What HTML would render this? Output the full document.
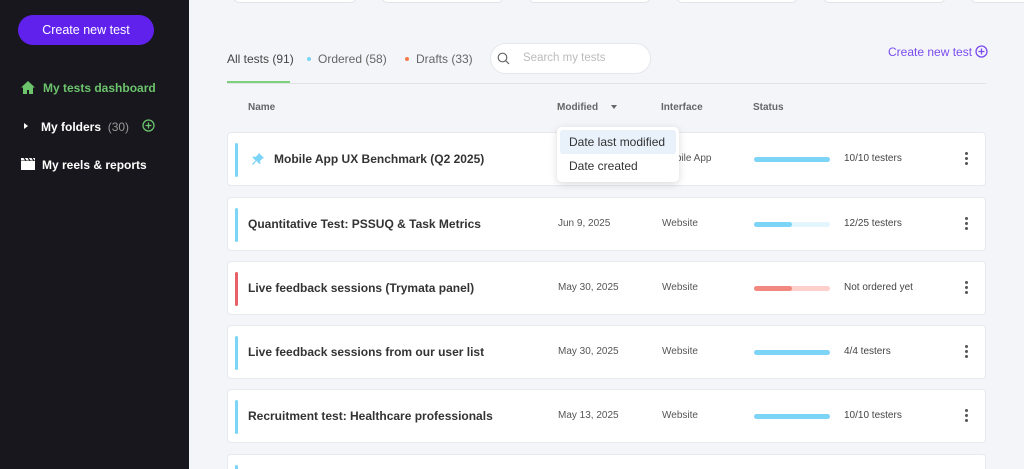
<!DOCTYPE html>
<html><head><meta charset="utf-8"><style>
*{box-sizing:border-box;margin:0;padding:0}
html,body{width:1024px;height:469px;overflow:hidden}
body{background:#f4f5f9;font-family:"Liberation Sans",sans-serif;position:relative}
.side{position:absolute;left:0;top:0;width:189px;height:469px;background:#17171d}
.btn{position:absolute;left:18px;top:15px;width:136px;height:30px;border-radius:15px;background:#5f21eb;color:#fff;font-size:12.5px;text-align:center;line-height:30px}
.nav{position:absolute;font-size:12px;font-weight:bold;color:#fff;white-space:nowrap}
.a{position:absolute;font-size:12px;white-space:nowrap}
.topc{position:absolute;top:-10px;height:13px;background:#fff;border:1px solid #e3e4ea;border-radius:8px}
.card{position:absolute;left:227px;width:759px;height:54px;background:#fff;border:1px solid #e8e9ee;border-radius:4px}
.bar{position:absolute;left:7px;top:10px;width:3px;height:34px;border-radius:2px}
.t{position:absolute;left:20px;top:19px;font-size:12px;font-weight:bold;color:#333}
.d{position:absolute;left:330px;top:20px;font-size:10px;color:#555}
.i{position:absolute;left:434px;top:20px;font-size:10px;color:#555}
.pb{position:absolute;left:526px;top:24px;width:76px;height:5px;border-radius:3px}
.pf{position:absolute;left:0;top:0;height:5px;border-radius:3px}
.s{position:absolute;left:616px;top:20px;font-size:10px;color:#444}
.k{position:absolute;left:737px;top:19px;width:3px}
.k i{display:block;width:3px;height:3px;border-radius:2px;background:#555;margin-bottom:2px}
</style></head><body>
<div class="side">
<div class="btn">Create new test</div>
<svg style="position:absolute;left:21px;top:81px" width="14" height="13" viewBox="0 0 14 13"><path d="M7 0L0 6.5h2V13h4V9h2v4h4V6.5h2z" fill="#6cc46c"/></svg>
<div class="nav" style="left:43px;top:81px;color:#6cc46c">My tests dashboard</div>
<div style="position:absolute;left:24px;top:123px;border-left:4px solid #fff;border-top:3px solid transparent;border-bottom:3px solid transparent"></div>
<div class="nav" style="left:41px;top:120px">My folders <span style="color:#999;font-weight:normal">&nbsp;(30)</span></div>
<svg style="position:absolute;left:142px;top:119px" width="13" height="13" viewBox="0 0 13 13"><circle cx="6.5" cy="6.5" r="5.5" fill="none" stroke="#6cc46c" stroke-width="1.3"/><path d="M6.5 3.5v6M3.5 6.5h6" stroke="#6cc46c" stroke-width="1.3"/></svg>
<svg style="position:absolute;left:21px;top:158px" width="14" height="12" viewBox="0 0 14 12"><rect x="0" y="3" width="14" height="9" fill="#fff"/><path d="M0 0h14v2.5H0z" fill="#fff"/><path d="M3 0l2 2.5M7 0l2 2.5M11 0l2 2.5" stroke="#17171d" stroke-width="1.2"/></svg>
<div class="nav" style="left:42px;top:158px">My reels &amp; reports</div>
</div>
<div class="topc" style="left:233px;width:124px"></div>
<div class="topc" style="left:381px;width:123px"></div>
<div class="topc" style="left:528px;width:123px"></div>
<div class="topc" style="left:676px;width:122px"></div>
<div class="topc" style="left:823px;width:123px"></div>
<div class="topc" style="left:970px;width:80px"></div>

<div class="a" style="left:227px;top:52px;color:#444">All tests (91)</div>
<div style="position:absolute;left:227px;top:81px;width:63px;height:2px;background:#7dd17d"></div>
<div style="position:absolute;left:227px;top:83px;width:759px;height:1px;background:#e2e3e8"></div>
<div style="position:absolute;left:307px;top:57px;width:4px;height:4px;border-radius:50%;background:#7cd4f6"></div>
<div class="a" style="left:318px;top:52px;color:#666">Ordered (58)</div>
<div style="position:absolute;left:405px;top:57px;width:4px;height:4px;border-radius:50%;background:#f47a4a"></div>
<div class="a" style="left:416px;top:52px;color:#666">Drafts (33)</div>
<div style="position:absolute;left:490px;top:43px;width:161px;height:31px;border-radius:16px;background:#fff;border:1px solid #e6e7ec"></div>
<svg style="position:absolute;left:497px;top:52px" width="13" height="13" viewBox="0 0 13 13"><circle cx="5.5" cy="5.5" r="4.3" fill="none" stroke="#666" stroke-width="1.2"/><path d="M8.7 8.7L12 12" stroke="#666" stroke-width="1.2"/></svg>
<div class="a" style="left:523px;top:52px;color:#bbb;font-size:11.5px">Search my tests</div>
<div class="a" style="left:888px;top:45px;color:#7a4cf0">Create new test</div>
<svg style="position:absolute;left:975px;top:45px" width="13" height="13" viewBox="0 0 13 13"><circle cx="6.5" cy="6.5" r="5.5" fill="none" stroke="#7a4cf0" stroke-width="1.3"/><path d="M6.5 3.5v6M3.5 6.5h6" stroke="#7a4cf0" stroke-width="1.3"/></svg>

<div class="a" style="left:248px;top:102px;font-size:10px;color:#666;font-weight:bold">Name</div>
<div class="a" style="left:557px;top:102px;font-size:10px;color:#666;font-weight:bold">Modified</div>
<div style="position:absolute;left:611px;top:105px;border-top:4px solid #666;border-left:3.5px solid transparent;border-right:3.5px solid transparent"></div>
<div class="a" style="left:661px;top:102px;font-size:10px;color:#666;font-weight:bold">Interface</div>
<div class="a" style="left:753px;top:102px;font-size:10px;color:#666;font-weight:bold">Status</div>

<div class="card" style="top:132px"><div class="bar" style="background:#7cd4f6"></div>
<svg style="position:absolute;left:24px;top:20px" width="12" height="12" viewBox="0 0 12 12"><path d="M7 0l5 5-1.5.5-2.5 2.5.5 2.5-1 .5-3-3L1 12 0 11l3.5-3.5-3-3 .5-1 2.5.5L6 1.5z" fill="#7cd4f6"/></svg>
<div class="t" style="left:46px">Mobile App UX Benchmark (Q2 2025)</div>
<div class="i">Mobile App</div>
<div class="pb" style="background:#7cd4f6"></div><div class="s">10/10 testers</div><div class="k"><i></i><i></i><i></i></div></div>

<div class="card" style="top:197px"><div class="bar" style="background:#7cd4f6"></div>
<div class="t">Quantitative Test: PSSUQ &amp; Task Metrics</div><div class="d">Jun 9, 2025</div><div class="i">Website</div>
<div class="pb" style="background:#e3f5fd"><div class="pf" style="width:38px;background:#7cd4f6"></div></div><div class="s">12/25 testers</div><div class="k"><i></i><i></i><i></i></div></div>

<div class="card" style="top:261px"><div class="bar" style="background:#e8616a"></div>
<div class="t">Live feedback sessions (Trymata panel)</div><div class="d">May 30, 2025</div><div class="i">Website</div>
<div class="pb" style="background:#fdd0cc"><div class="pf" style="width:38px;background:#f28880"></div></div><div class="s">Not ordered yet</div><div class="k"><i></i><i></i><i></i></div></div>

<div class="card" style="top:325px"><div class="bar" style="background:#7cd4f6"></div>
<div class="t">Live feedback sessions from our user list</div><div class="d">May 30, 2025</div><div class="i">Website</div>
<div class="pb" style="background:#7cd4f6"></div><div class="s">4/4 testers</div><div class="k"><i></i><i></i><i></i></div></div>

<div class="card" style="top:389px"><div class="bar" style="background:#7cd4f6"></div>
<div class="t">Recruitment test: Healthcare professionals</div><div class="d">May 13, 2025</div><div class="i">Website</div>
<div class="pb" style="background:#7cd4f6"></div><div class="s">10/10 testers</div><div class="k"><i></i><i></i><i></i></div></div>

<div class="card" style="top:454px;height:15px;border-bottom:none;border-radius:4px 4px 0 0"><div class="bar" style="background:#7cd4f6;height:5px"></div></div>

<div style="position:absolute;left:557px;top:127px;width:122px;height:55px;background:#fff;border-radius:5px;box-shadow:0 2px 8px rgba(0,0,0,.15)">
<div style="position:absolute;left:3px;top:3px;width:116px;height:24px;background:#e9f1fb;border-radius:3px"></div>
<div class="a" style="left:12px;top:8px;color:#333">Date last modified</div>
<div class="a" style="left:12px;top:32px;color:#333">Date created</div>
</div>
</body></html>
